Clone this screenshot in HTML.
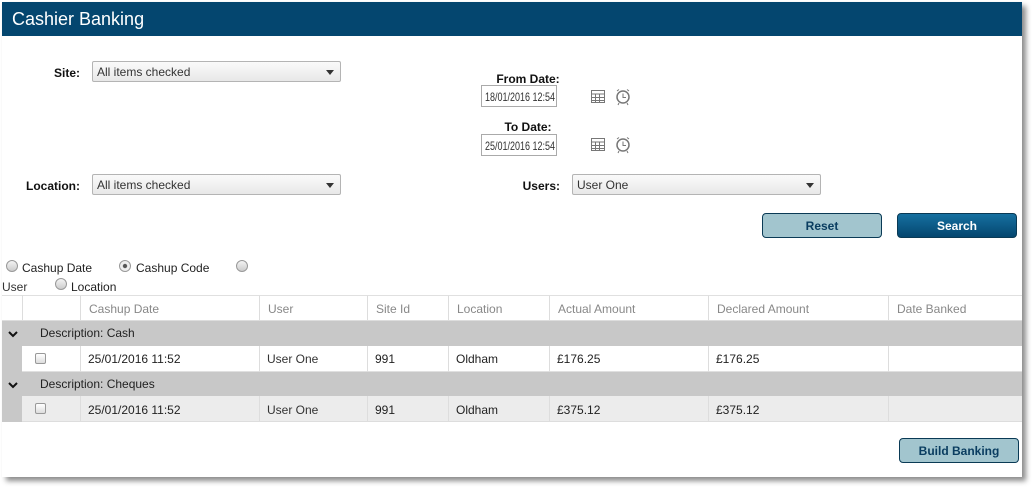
<!DOCTYPE html>
<html><head><meta charset="utf-8"><style>
*{margin:0;padding:0;box-sizing:border-box}
body{width:1036px;height:488px;background:#fff;font-family:"Liberation Sans",sans-serif;font-size:12px;color:#222;position:relative;overflow:hidden}
.a{position:absolute;white-space:nowrap}
.page{left:2px;top:2px;width:1020px;height:475px;background:#fff;box-shadow:4px 4px 5px rgba(0,0,0,.45)}
.hdr{left:2px;top:2px;width:1020px;height:34px;background:#04466f;color:#fff;font-size:18px;padding:7px 0 0 10px}
.lbl{font-weight:bold;color:#111;text-align:right}
.sel{height:21px;border:1px solid #b4b4b4;border-radius:2px;background:linear-gradient(#fafafa,#e8e8e8);padding:3px 4px;color:#333}
.sel:after{content:"";position:absolute;right:6px;top:8px;border:4px solid transparent;border-top:5px solid #333;border-bottom:0}
.inp{height:22px;border:1px solid #aaa;padding:4px 1px 4px 3px;color:#333;width:76px;overflow:hidden}
.inp span{display:inline-block;transform:scaleX(0.75);transform-origin:0 0}
.btn{height:25px;border:1px solid #0a3a55;border-radius:4px;text-align:center;font-weight:bold;padding-top:5px}
.rst{background:#a2c5ce;color:#0a3d60}
.srch{background:linear-gradient(#1670a0,#04466f);color:#fff}
.th{top:295px;height:26px;border-top:1px solid #e0e0e0;border-bottom:1px solid #ddd;color:#888;padding:6px 8px}
.vl{border-left:1px solid #ddd}
.cb{width:11px;height:11px;border:1px solid #999;border-radius:2px;background:linear-gradient(#fff,#ddd)}
.rd{width:12px;height:12px;border:1px solid #999;border-radius:50%;background:linear-gradient(#f4f4f4,#ccc)}
</style></head><body>
<div class="a page"></div>
<div class="a hdr">Cashier Banking</div>

<div class="a lbl" style="left:20px;top:66px;width:60px">Site:</div>
<div class="a sel" style="left:92px;top:61px;width:249px">All items checked</div>
<div class="a lbl" style="left:480px;top:72px;width:96px;text-align:center">From Date:</div>
<div class="a inp" style="left:481px;top:85px"><span>18/01/2016 12:54</span></div>
<div class="a lbl" style="left:480px;top:120px;width:96px;text-align:center">To Date:</div>
<div class="a inp" style="left:481px;top:134px"><span>25/01/2016 12:54</span></div>
<svg class="a" style="left:590px;top:88px" width="48" height="80" viewBox="0 0 48 80">
<g fill="none" stroke="#777" stroke-width="1">
<rect x="1.5" y="2.5" width="13" height="12"/><path d="M1.5 6h13M5.5 6v9M9.5 6v9M1.5 9.5h13M1.5 12.5h13"/>
<circle cx="33" cy="9" r="6" stroke-width="1.5"/><path d="M33 5.5v4h3M27 3l2-1.5M39 3l-2-1.5M29 15l-1 2M37 15l1 2"/>
<g transform="translate(0,48)"><rect x="1.5" y="2.5" width="13" height="12"/><path d="M1.5 6h13M5.5 6v9M9.5 6v9M1.5 9.5h13M1.5 12.5h13"/>
<circle cx="33" cy="9" r="6" stroke-width="1.5"/><path d="M33 5.5v4h3M27 3l2-1.5M39 3l-2-1.5M29 15l-1 2M37 15l1 2"/></g>
</g></svg>

<div class="a lbl" style="left:10px;top:179px;width:70px">Location:</div>
<div class="a sel" style="left:92px;top:174px;width:249px">All items checked</div>
<div class="a lbl" style="left:500px;top:179px;width:60px">Users:</div>
<div class="a sel" style="left:572px;top:174px;width:249px">User One</div>

<div class="a btn rst" style="left:762px;top:213px;width:120px">Reset</div>
<div class="a btn srch" style="left:897px;top:213px;width:120px">Search</div>

<div class="a rd" style="left:6px;top:260px"></div><div class="a" style="left:22px;top:261px">Cashup Date</div>
<div class="a rd" style="left:119px;top:260px;background:radial-gradient(#555 25%,#eee 35%)"></div><div class="a" style="left:136px;top:261px">Cashup Code</div>
<div class="a rd" style="left:236px;top:260px"></div>
<div class="a" style="left:2px;top:280px;color:#333">User</div>
<div class="a rd" style="left:55px;top:278px"></div><div class="a" style="left:71px;top:280px">Location</div>

<div class="a th" style="left:2px;width:1020px;padding:0"></div>
<div class="a th vl" style="left:22px;width:58px;border-top:0"></div>
<div class="a th vl" style="left:80px;width:179px">Cashup Date</div>
<div class="a th vl" style="left:259px;width:108px">User</div>
<div class="a th vl" style="left:367px;width:81px">Site Id</div>
<div class="a th vl" style="left:448px;width:101px">Location</div>
<div class="a th vl" style="left:549px;width:159px">Actual Amount</div>
<div class="a th vl" style="left:708px;width:180px">Declared Amount</div>
<div class="a th vl" style="left:888px;width:134px">Date Banked</div>

<div class="a" style="left:2px;top:321px;width:1020px;height:25px;background:#c8c8c8"></div>
<div class="a" style="left:40px;top:326px">Description: Cash</div>
<div class="a" style="left:2px;top:346px;width:20px;height:76px;background:#c8c8c8"></div>
<div class="a" style="left:22px;top:346px;width:1000px;height:26px;background:#fff;border-bottom:1px solid #e0e0e0"></div>
<div class="a" style="left:2px;top:372px;width:1020px;height:24px;background:#c8c8c8"></div>
<div class="a" style="left:40px;top:377px">Description: Cheques</div>
<div class="a" style="left:22px;top:396px;width:1000px;height:26px;background:#ececec;border-bottom:1px solid #ddd"></div>
<svg class="a" style="left:7px;top:330px" width="12" height="60"><path d="M2 2l4 4 4-4M2 53l4 4 4-4" fill="none" stroke="#111" stroke-width="2"/></svg>

<div class="a cb" style="left:35px;top:353px"></div>
<div class="a cb" style="left:35px;top:403px"></div>
<div class="a vl" style="left:80px;top:346px;height:26px"></div><div class="a vl" style="left:80px;top:396px;height:26px"></div>
<div class="a vl" style="left:259px;top:346px;height:26px"></div><div class="a vl" style="left:259px;top:396px;height:26px"></div>
<div class="a vl" style="left:367px;top:346px;height:26px"></div><div class="a vl" style="left:367px;top:396px;height:26px"></div>
<div class="a vl" style="left:448px;top:346px;height:26px"></div><div class="a vl" style="left:448px;top:396px;height:26px"></div>
<div class="a vl" style="left:549px;top:346px;height:26px"></div><div class="a vl" style="left:549px;top:396px;height:26px"></div>
<div class="a vl" style="left:708px;top:346px;height:26px"></div><div class="a vl" style="left:708px;top:396px;height:26px"></div>
<div class="a vl" style="left:888px;top:346px;height:26px"></div><div class="a vl" style="left:888px;top:396px;height:26px"></div>

<div class="a" style="left:88px;top:352px">25/01/2016 11:52</div>
<div class="a" style="left:267px;top:352px;color:#333">User One</div>
<div class="a" style="left:375px;top:352px">991</div>
<div class="a" style="left:456px;top:352px">Oldham</div>
<div class="a" style="left:557px;top:352px">£176.25</div>
<div class="a" style="left:716px;top:352px">£176.25</div>
<div class="a" style="left:88px;top:403px">25/01/2016 11:52</div>
<div class="a" style="left:267px;top:403px;color:#333">User One</div>
<div class="a" style="left:375px;top:403px">991</div>
<div class="a" style="left:456px;top:403px">Oldham</div>
<div class="a" style="left:557px;top:403px">£375.12</div>
<div class="a" style="left:716px;top:403px">£375.12</div>

<div class="a btn rst" style="left:899px;top:438px;width:120px">Build Banking</div>
</body></html>
